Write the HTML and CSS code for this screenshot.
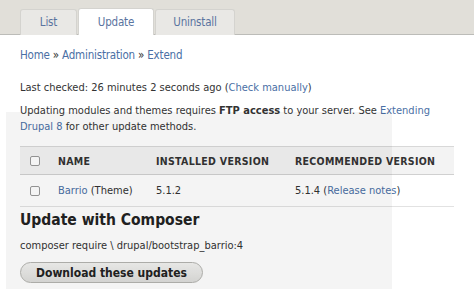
FILE: index.html
```html
<!DOCTYPE html>
<html lang="en">
<head>
    <meta charset="UTF-8">
    <title>Available updates</title>
    <link rel="stylesheet" href="styles.css">
</head>
<body>
    <div class="tabs">
        <a class="tab" href="#">List</a>
        <a class="tab active" href="#">Update</a>
        <a class="tab" href="#">Uninstall</a>
    </div>

    <div class="content">
        <p class="breadcrumb">
            <a href="#">Home</a> » <a href="#">Administration</a> » <a href="#">Extend</a>
        </p>

        <p class="checked">Last checked: 26 minutes 2 seconds ago (<a href="#">Check manually</a>)</p>

        <p class="note">Updating modules and themes requires <strong>FTP access</strong> to your server. See <a href="#">Extending Drupal 8</a> for other update methods.</p>

        <table class="updates">
            <thead>
                <tr>
                    <th class="check"><span class="box"></span></th>
                    <th class="name">Name</th>
                    <th class="installed">Installed version</th>
                    <th>Recommended version</th>
                </tr>
            </thead>
            <tbody>
                <tr>
                    <td class="check"><span class="box"></span></td>
                    <td><a href="#">Barrio</a> (Theme)</td>
                    <td>5.1.2</td>
                    <td>5.1.4 (<a href="#">Release notes</a>)</td>
                </tr>
            </tbody>
        </table>

        <h2>Update with Composer</h2>
        <p class="cmd">composer require \ drupal/bootstrap_barrio:4</p>
        <button type="button">Download these updates</button>
    </div>

    <div class="shade"></div>
</body>
</html>
```

FILE: styles.css
```css
body {
    margin: 0;
    font-family: "DejaVu Sans Condensed", "DejaVu Sans", sans-serif;
    font-size: 11px;
    color: #333;
    background: #fff;
    position: relative;
    height: 292px;
    overflow: hidden;
}
a {
    color: #4a6fa5;
    text-decoration: none;
}
.tabs {
    display: flex;
    align-items: flex-end;
    height: 34px;
    padding-left: 20px;
    background: #e1dfd9;
    border-bottom: 1px solid #bcbcb8;
}
.tab {
    display: block;
    height: 25px;
    line-height: 25px;
    text-align: center;
    font-size: 11.5px;
    letter-spacing: -0.2px;
    color: #5a74a0;
    background: #e9e8e5;
    border: 1px solid #d4d3cf;
    border-bottom: none;
    border-radius: 3px 3px 0 0;
    margin-right: 1px;
    margin-bottom: -1px;
}
.tab:nth-child(1) { width: 55px; }
.tab:nth-child(2) { width: 74px; }
.tab:nth-child(3) { width: 78px; }
.tab.active {
    background: #fff;
    height: 26px;
    line-height: 26px;
}
.content {
    padding: 0 20px;
}
p {
    margin: 0;
    line-height: 16px;
}
.breadcrumb {
    margin-top: 12px;
    font-size: 11.5px;
    letter-spacing: -0.2px;
}
.checked {
    margin-top: 17px;
}
.note {
    margin-top: 7px;
}
.updates {
    width: 434px;
    border-collapse: collapse;
    margin-top: 11px;
}
.updates th, .updates td {
    text-align: left;
    padding: 0;
    border-bottom: 1px solid #e2e2e2;
}
.updates th {
    height: 27px;
    font-size: 10.5px;
    font-weight: bold;
    text-transform: uppercase;
    letter-spacing: 0.3px;
    color: #333;
    background: #f3f3f3;
    border-top: 1px solid #d8d8d8;
    border-bottom: 1px solid #d0d0d0;
}
.updates td {
    height: 31px;
}
.updates .check {
    width: 28px;
    padding-left: 10px;
}
.name { width: 98px; }
.installed { width: 139px; }
.box {
    display: block;
    width: 8px;
    height: 8px;
    border: 1px solid #999;
    border-radius: 2px;
    background: #fff;
}
h2 {
    margin: 3px 0 0;
    font-size: 15.5px;
    line-height: 20px;
    font-weight: bold;
    color: #222;
}
.cmd {
    margin-top: 8px;
}
button {
    margin-top: 8px;
    width: 183px;
    height: 21px;
    padding: 0;
    font-family: "DejaVu Sans Condensed", "DejaVu Sans", sans-serif;
    font-size: 12px;
    font-weight: bold;
    color: #222;
    background: linear-gradient(#f2f2f0, #dddddb);
    border: 1px solid #b4b4b0;
    border-radius: 11px;
}
.shade {
    position: absolute;
    left: 6px;
    top: 112px;
    width: 386px;
    height: 177px;
    background: rgba(0, 0, 0, 0.045);
    pointer-events: none;
}
```
